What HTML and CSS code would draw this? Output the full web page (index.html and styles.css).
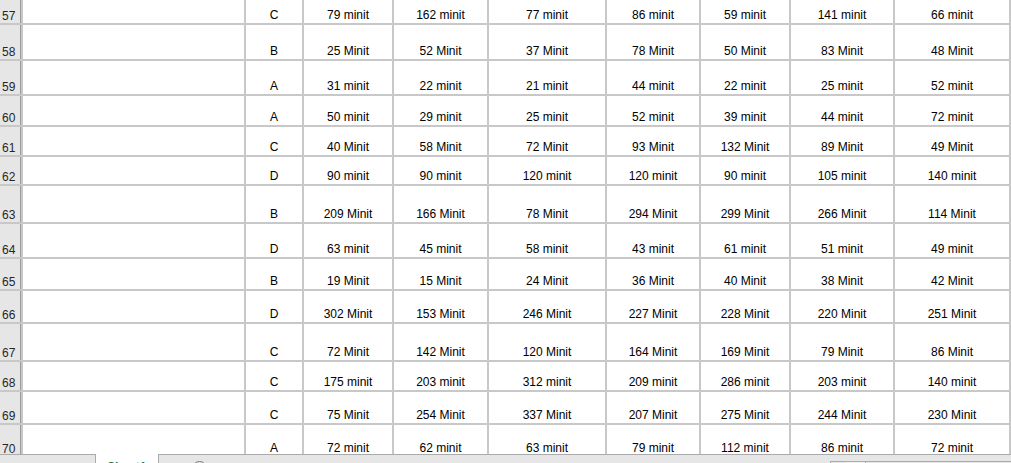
FILE: index.html
```html
<!DOCTYPE html>
<html>
<head>
<meta charset="utf-8">
<link rel="stylesheet" href="styles.css">
</head>
<body>
<div class="app">
  <div class="sheet">
    <div class="rh">57</div><div class="c"></div><div class="c">C</div><div class="c">79 minit</div><div class="c">162 minit</div><div class="c">77 minit</div><div class="c">86 minit</div><div class="c">59 minit</div><div class="c">141 minit</div><div class="c">66 minit</div>
    <div class="rh">58</div><div class="c"></div><div class="c">B</div><div class="c">25 Minit</div><div class="c">52 Minit</div><div class="c">37 Minit</div><div class="c">78 Minit</div><div class="c">50 Minit</div><div class="c">83 Minit</div><div class="c">48 Minit</div>
    <div class="rh">59</div><div class="c"></div><div class="c">A</div><div class="c">31 minit</div><div class="c">22 minit</div><div class="c">21 minit</div><div class="c">44 minit</div><div class="c">22 minit</div><div class="c">25 minit</div><div class="c">52 minit</div>
    <div class="rh">60</div><div class="c"></div><div class="c">A</div><div class="c">50 minit</div><div class="c">29 minit</div><div class="c">25 minit</div><div class="c">52 minit</div><div class="c">39 minit</div><div class="c">44 minit</div><div class="c">72 minit</div>
    <div class="rh">61</div><div class="c"></div><div class="c">C</div><div class="c">40 Minit</div><div class="c">58 Minit</div><div class="c">72 Minit</div><div class="c">93 Minit</div><div class="c">132 Minit</div><div class="c">89 Minit</div><div class="c">49 Minit</div>
    <div class="rh">62</div><div class="c"></div><div class="c">D</div><div class="c">90 minit</div><div class="c">90 minit</div><div class="c">120 minit</div><div class="c">120 minit</div><div class="c">90 minit</div><div class="c">105 minit</div><div class="c">140 minit</div>
    <div class="rh">63</div><div class="c"></div><div class="c">B</div><div class="c">209 Minit</div><div class="c">166 Minit</div><div class="c">78 Minit</div><div class="c">294 Minit</div><div class="c">299 Minit</div><div class="c">266 Minit</div><div class="c">114 Minit</div>
    <div class="rh">64</div><div class="c"></div><div class="c">D</div><div class="c">63 minit</div><div class="c">45 minit</div><div class="c">58 minit</div><div class="c">43 minit</div><div class="c">61 minit</div><div class="c">51 minit</div><div class="c">49 minit</div>
    <div class="rh">65</div><div class="c"></div><div class="c">B</div><div class="c">19 Minit</div><div class="c">15 Minit</div><div class="c">24 Minit</div><div class="c">36 Minit</div><div class="c">40 Minit</div><div class="c">38 Minit</div><div class="c">42 Minit</div>
    <div class="rh">66</div><div class="c"></div><div class="c">D</div><div class="c">302 Minit</div><div class="c">153 Minit</div><div class="c">246 Minit</div><div class="c">227 Minit</div><div class="c">228 Minit</div><div class="c">220 Minit</div><div class="c">251 Minit</div>
    <div class="rh">67</div><div class="c"></div><div class="c">C</div><div class="c">72 Minit</div><div class="c">142 Minit</div><div class="c">120 Minit</div><div class="c">164 Minit</div><div class="c">169 Minit</div><div class="c">79 Minit</div><div class="c">86 Minit</div>
    <div class="rh">68</div><div class="c"></div><div class="c">C</div><div class="c">175 minit</div><div class="c">203 minit</div><div class="c">312 minit</div><div class="c">209 minit</div><div class="c">286 minit</div><div class="c">203 minit</div><div class="c">140 minit</div>
    <div class="rh">69</div><div class="c"></div><div class="c">C</div><div class="c">75 Minit</div><div class="c">254 Minit</div><div class="c">337 Minit</div><div class="c">207 Minit</div><div class="c">275 Minit</div><div class="c">244 Minit</div><div class="c">230 Minit</div>
    <div class="rh">70</div><div class="c"></div><div class="c">A</div><div class="c">72 minit</div><div class="c">62 minit</div><div class="c">63 minit</div><div class="c">79 minit</div><div class="c">112 minit</div><div class="c">86 minit</div><div class="c">72 minit</div>
  </div>
  <div class="tabbar">
    <div class="nav"></div>
    <div class="tab-active">Sheet1</div>
    <div class="rest">
      <div class="addbtn"></div>
      <div class="spacer"></div>
      <div class="splitbox"></div>
      <div class="hscroll"></div>
    </div>
  </div>
</div>
</body>
</html>
```

FILE: styles.css
```css
html, body {
  margin: 0;
  padding: 0;
  height: 463px;
  overflow: hidden;
  background: #ffffff;
}
.app {
  display: flex;
  flex-direction: column;
  width: 1011px;
  font-family: "Liberation Sans", Arial, sans-serif;
}
.sheet {
  flex: none;
  height: 454px;
  overflow: hidden;
  display: grid;
  grid-template-columns: 21px 221px 56px 88px 93px 116px 92px 88px 102px 114px;
  grid-template-rows: 23px 34px 33px 29px 28px 27px 36px 33px 30px 31px 36px 28px 31px 31px;
  gap: 2px;
  padding-right: 2px;
  background: #c8c8c8;
  box-sizing: border-box;
  width: 1011px;
}
.c {
  background: #ffffff;
  display: flex;
  align-items: flex-end;
  justify-content: center;
  font-size: 12px;
  line-height: 14px;
  padding-bottom: 1px;
  color: #000;
  white-space: nowrap;
}
.rh {
  background: #e6e6e6;
  border-right: 1px solid #9b9b9b;
  display: flex;
  align-items: flex-end;
  justify-content: flex-start;
  padding-left: 2px;
  font-size: 12px;
  line-height: 14px;
  color: #262626;
}
.tabbar {
  flex: none;
  display: flex;
  height: 28px;
  background: #e6e6e6;
}
.nav {
  width: 95px;
  border-top: 1px solid #ababab;
  border-right: 1px solid #ababab;
  background: #e6e6e6;
}
.tab-active {
  width: 63px;
  background: #ffffff;
  color: #217346;
  font-weight: bold;
  font-size: 12px;
  line-height: 14px;
  padding: 6px 0 0 11px;
  box-sizing: border-box;
  border-right: 1px solid #ababab;
}
.rest {
  flex: 1;
  display: flex;
  align-items: flex-start;
  border-top: 1px solid #ababab;
}
.addbtn {
  width: 15px;
  height: 15px;
  border: 1px solid #7a7a7a;
  border-radius: 50%;
  margin: 6px 0 0 33px;
  box-sizing: border-box;
}
.spacer {
  flex: 1;
}
.splitbox {
  width: 16px;
  height: 14px;
  margin-top: 6px;
  border: 1px solid #ababab;
  border-right: none;
  background: #e6e6e6;
  box-sizing: border-box;
}
.hscroll {
  width: 165px;
  height: 14px;
  margin-top: 6px;
  border-top: 1px solid #ababab;
  display: flex;
}
.hscroll::before {
  content: "";
  width: 19px;
  background: #f0f0f0;
  border-right: 1px solid #ababab;
}
```
